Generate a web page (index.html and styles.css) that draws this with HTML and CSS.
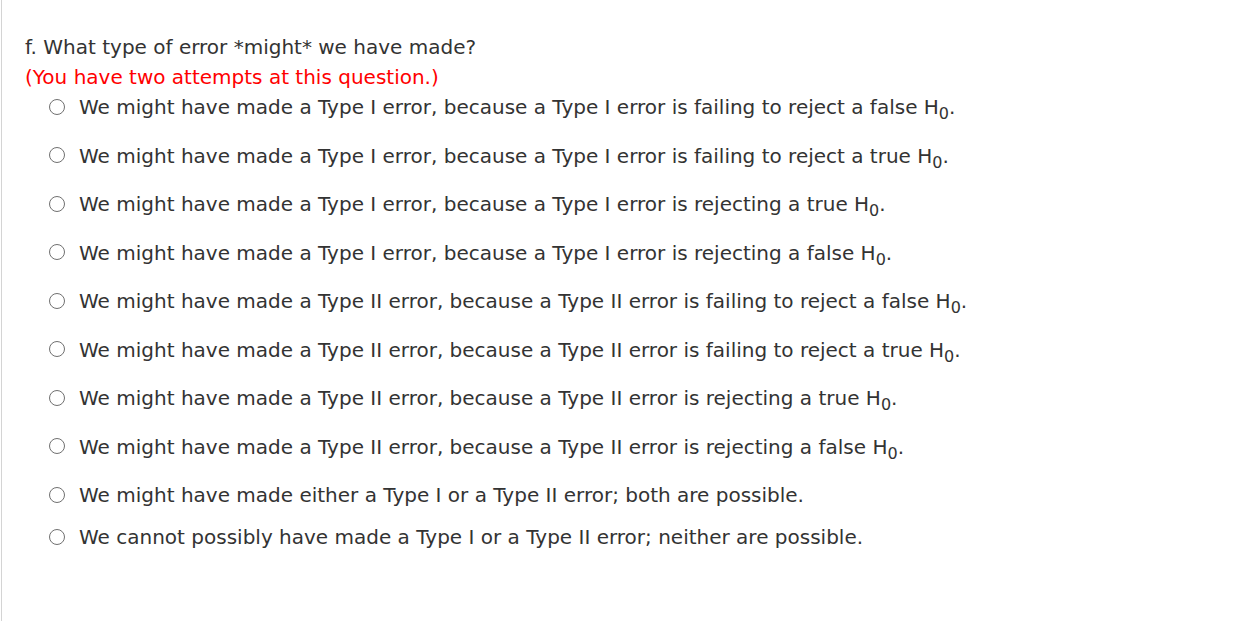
FILE: index.html
```html
<!DOCTYPE html>
<html>
<head>
<meta charset="utf-8">
<link rel="stylesheet" href="styles.css">
</head>
<body>
<div class="panel">
  <div class="question">
    <div class="prompt">f. What type of error *might* we have made?</div>
    <div class="note">(You have two attempts at this question.)</div>
    <ul class="choices">
      <li class="choice sub"><span class="radio"></span><span class="label">We might have made a Type I error, because a Type I error is failing to reject a false H<sub>0</sub>.</span></li>
      <li class="choice sub"><span class="radio"></span><span class="label">We might have made a Type I error, because a Type I error is failing to reject a true H<sub>0</sub>.</span></li>
      <li class="choice sub"><span class="radio"></span><span class="label">We might have made a Type I error, because a Type I error is rejecting a true H<sub>0</sub>.</span></li>
      <li class="choice sub"><span class="radio"></span><span class="label">We might have made a Type I error, because a Type I error is rejecting a false H<sub>0</sub>.</span></li>
      <li class="choice sub"><span class="radio"></span><span class="label">We might have made a Type II error, because a Type II error is failing to reject a false H<sub>0</sub>.</span></li>
      <li class="choice sub"><span class="radio"></span><span class="label">We might have made a Type II error, because a Type II error is failing to reject a true H<sub>0</sub>.</span></li>
      <li class="choice sub"><span class="radio"></span><span class="label">We might have made a Type II error, because a Type II error is rejecting a true H<sub>0</sub>.</span></li>
      <li class="choice sub"><span class="radio"></span><span class="label">We might have made a Type II error, because a Type II error is rejecting a false H<sub>0</sub>.</span></li>
      <li class="choice"><span class="radio"></span><span class="label">We might have made either a Type I or a Type II error; both are possible.</span></li>
      <li class="choice"><span class="radio"></span><span class="label">We cannot possibly have made a Type I or a Type II error; neither are possible.</span></li>
    </ul>
  </div>
</div>
</body>
</html>
```

FILE: styles.css
```css
html, body {
  margin: 0;
  padding: 0;
  background: #fff;
}
body {
  font-family: "DejaVu Sans", Verdana, sans-serif;
  font-size: 20px;
  color: #333;
}
.panel {
  margin-left: 1px;
  border-left: 1px solid #d4d4d4;
  min-height: 621px;
  box-sizing: border-box;
  padding: 32px 0 0 23px;
}
.prompt {
  line-height: 30px;
}
.note {
  color: #f00;
  line-height: 30px;
}
.choices {
  list-style: none;
  margin: 3px 0 0 0;
  padding: 0 0 0 24px;
}
.choice {
  display: flex;
  align-items: flex-start;
  gap: 14px;
  height: 42px;
  box-sizing: border-box;
}
.choice.sub {
  height: 48.5px;
}
.label {
  line-height: 24px;
}
.radio {
  width: 16px;
  height: 16px;
  margin-top: 3.5px;
  border: 1.6px solid #707070;
  border-radius: 50%;
  box-sizing: border-box;
  flex: none;
}
.label sub {
  font-size: 0.8em;
  line-height: 0;
}
```
